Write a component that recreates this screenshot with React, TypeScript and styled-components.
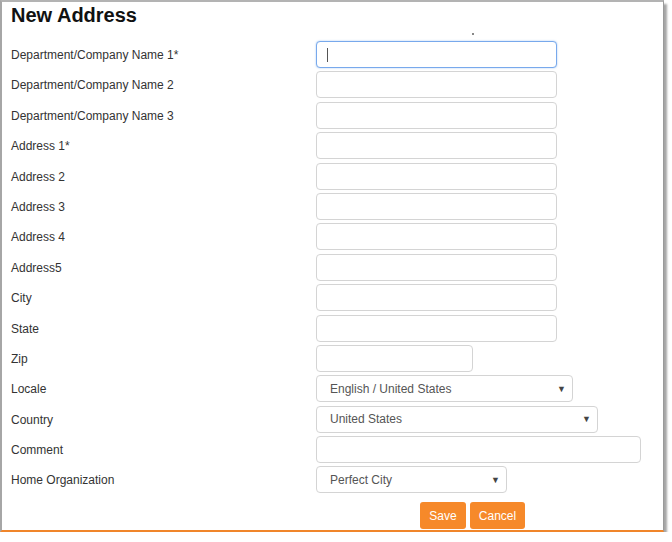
import React from "react";
import styled, { createGlobalStyle } from "styled-components";

const Global = createGlobalStyle`
  html, body { margin: 0; padding: 0; background: #ffffff; }
  body { font-family: Arial, "Liberation Sans", sans-serif; }
`;

const Frame = styled.div`
  position: relative;
  box-sizing: border-box;
  width: 664px;
  height: 532px;
  border-left: 2px solid #a6a6a6;
  border-top: 2px solid #b3b3b3;
  border-right: 1px solid #9a9a9a;
  border-bottom: 2px solid #f0852a;
  box-shadow: 3px 4px 2px rgba(0, 0, 0, 0.35);
  background: #fff;
  padding: 0 0 0 9px;
`;

const Title = styled.h1`
  margin: 0;
  padding-top: 2px;
  font-size: 20px;
  line-height: 22px;
  font-weight: bold;
  color: #111;
`;

const Form = styled.div`
  display: grid;
  grid-template-columns: 305px 1fr;
  grid-auto-rows: 27px;
  row-gap: 3.4px;
  margin-top: 15px;
  align-items: center;
`;

const Label = styled.label`
  font-size: 12px;
  color: #333;
  line-height: 14px;
  padding-top: 1px;
`;

const Input = styled.div<{ $w: number; $focus?: boolean }>`
  box-sizing: border-box;
  width: ${(p) => p.$w}px;
  height: 27px;
  border: 1px solid ${(p) => (p.$focus ? "#78a9ec" : "#d4d4d4")};
  box-shadow: ${(p) => (p.$focus ? "0 0 2px rgba(102,160,233,0.6)" : "none")};
  border-radius: 4px;
  background: #fff;
  display: flex;
  align-items: center;
  padding-left: 10px;
`;

const Caret = styled.span`
  width: 1px;
  height: 14px;
  background: #555;
`;

const Select = styled.div<{ $w: number }>`
  box-sizing: border-box;
  width: ${(p) => p.$w}px;
  height: 27px;
  border: 1px solid #d4d4d4;
  border-radius: 4px;
  background: #fff;
  display: flex;
  align-items: center;
  justify-content: space-between;
  padding: 0 6px 0 13px;
  font-size: 12px;
  color: #555;
`;

const Arrow = styled.span`
  font-size: 9px;
  color: #444;
`;

const Actions = styled.div`
  grid-column: 2;
  display: flex;
  gap: 4px;
  padding-left: 104px;
  margin-top: 11px;
  height: 27px;
`;

const Button = styled.button<{ $w: number }>`
  box-sizing: border-box;
  width: ${(p) => p.$w}px;
  height: 27px;
  border: none;
  border-radius: 3px;
  background: #f6892a;
  color: #fff;
  font-family: Arial, "Liberation Sans", sans-serif;
  font-size: 12px;
  padding: 0;
`;

const Dot = styled.span`
  position: absolute;
  left: 470px;
  top: 31px;
  width: 2px;
  height: 2px;
  background: #888;
`;

type Row =
  | { label: string; kind: "input"; w: number; focus?: boolean }
  | { label: string; kind: "select"; w: number; value: string };

const rows: Row[] = [
  { label: "Department/Company Name 1*", kind: "input", w: 241, focus: true },
  { label: "Department/Company Name 2", kind: "input", w: 241 },
  { label: "Department/Company Name 3", kind: "input", w: 241 },
  { label: "Address 1*", kind: "input", w: 241 },
  { label: "Address 2", kind: "input", w: 241 },
  { label: "Address 3", kind: "input", w: 241 },
  { label: "Address 4", kind: "input", w: 241 },
  { label: "Address5", kind: "input", w: 241 },
  { label: "City", kind: "input", w: 241 },
  { label: "State", kind: "input", w: 241 },
  { label: "Zip", kind: "input", w: 157 },
  { label: "Locale", kind: "select", w: 257, value: "English / United States" },
  { label: "Country", kind: "select", w: 282, value: "United States" },
  { label: "Comment", kind: "input", w: 325 },
  { label: "Home Organization", kind: "select", w: 191, value: "Perfect City" },
];

export default function App() {
  return (
    <>
      <Global />
      <Frame>
        <Dot />
        <Title>New Address</Title>
        <Form>
          {rows.map((r) => (
            <React.Fragment key={r.label}>
              <Label>{r.label}</Label>
              {r.kind === "input" ? (
                <Input $w={r.w} $focus={r.focus}>
                  {r.focus && <Caret />}
                </Input>
              ) : (
                <Select $w={r.w}>
                  <span>{r.value}</span>
                  <Arrow>▼</Arrow>
                </Select>
              )}
            </React.Fragment>
          ))}
          <Actions>
            <Button $w={46}>Save</Button>
            <Button $w={55}>Cancel</Button>
          </Actions>
        </Form>
      </Frame>
    </>
  );
}
